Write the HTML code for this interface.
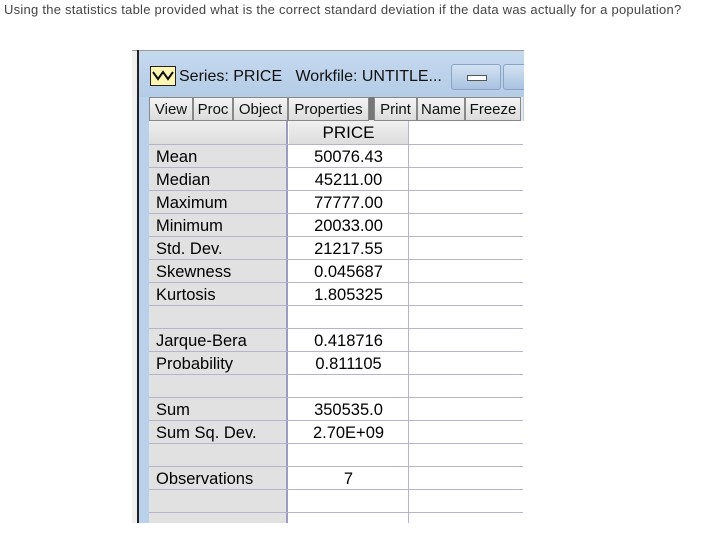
<!DOCTYPE html>
<html><head><style>
body{margin:0;width:703px;height:535px;background:#fff;position:relative;overflow:hidden;font-family:"Liberation Sans",sans-serif}
.q{position:absolute;left:4px;top:2px;font-size:13px;letter-spacing:0.25px;color:#444}
.a{position:absolute}
.btn{position:absolute;top:97px;height:24px;background:linear-gradient(#f4f4f4,#dcdcdc);border:1px solid #888;box-sizing:border-box;font-size:15px;line-height:23px;text-align:center;color:#111}
.row{position:absolute;left:149px;width:374px;height:23px;border-bottom:1px solid #b4b4cc;box-sizing:border-box}
.l{position:absolute;left:0;top:0;width:139px;height:22px;background:#e1e1e1;border-right:2px solid #9c9cc0;box-sizing:border-box;font-size:16.5px;line-height:25px;padding-left:7px;color:#000}
.v{position:absolute;left:140px;top:0;width:119px;height:22px;border-right:1px solid #b4b4cc;font-size:16.5px;line-height:25px;text-align:center;color:#000}
</style></head><body>
<div class="q">Using the statistics table provided what is the correct standard deviation if the data was actually for a population?</div>
<div class="a" style="left:132px;top:50px;width:392px;height:480px;background:#f0f0f0;border-top:1px solid #999"></div>
<div class="a" style="left:138px;top:51px;width:386px;height:480px;background:#b9d1ea;border-left:1px solid #333;border-top-left-radius:6px"></div>
<div class="a" style="left:138px;top:51px;width:386px;height:46px;background:linear-gradient(#c6d9ef,#b4cce6)"></div>
<div class="a" style="left:150px;top:66px;width:26px;height:20px;background:#fff6b4;border:1px solid #222;box-sizing:border-box">
<svg width="24" height="18" style="position:absolute;left:0;top:0"><path d="M2 5 L7 12 L12 5 L17 12 L22 5" fill="none" stroke="#111" stroke-width="2"/></svg></div>
<div class="a" style="left:179px;top:68px;font-size:16px;color:#111;white-space:nowrap">Series: PRICE&nbsp;&nbsp; Workfile: UNTITLE...</div>
<div class="a" style="left:451px;top:64px;width:48px;height:24px;border:1px solid #8aa4c4;border-radius:3px;background:linear-gradient(#d3e2f3,#a9c2e0)"><div style="position:absolute;left:15px;top:10px;width:18px;height:4px;background:#fff;border:1px solid #555"></div></div>
<div class="a" style="left:503px;top:64px;width:30px;height:24px;border:1px solid #8aa4c4;border-radius:3px;background:linear-gradient(#d3e2f3,#a9c2e0)"></div>
<div class="a" style="left:149px;top:97px;width:374px;height:24px;background:#e8e8e8"></div>
<div class="btn" style="left:149px;width:44px">View</div>
<div class="btn" style="left:193px;width:40px">Proc</div>
<div class="btn" style="left:233px;width:55px">Object</div>
<div class="btn" style="left:288px;width:81px">Properties</div>
<div class="a" style="left:369px;top:97px;width:5px;height:23px;background:#777"></div>
<div class="btn" style="left:374px;width:43px">Print</div>
<div class="btn" style="left:417px;width:48px">Name</div>
<div class="btn" style="left:465px;width:56px">Freeze</div>
<div class="a" style="left:149px;top:121px;width:375px;height:410px;background:#fff"></div>
<div class="row" style="top:121px;height:24px"><div class="l" style="height:23px;background:linear-gradient(#eee,#ddd)"></div><div class="v" style="height:23px;background:linear-gradient(#f0f0f0,#ddd);font-size:17px;line-height:24px">PRICE</div></div>
<div class="row" style="top:145px"><div class="l">Mean</div><div class="v">50076.43</div></div>
<div class="row" style="top:168px"><div class="l">Median</div><div class="v">45211.00</div></div>
<div class="row" style="top:191px"><div class="l">Maximum</div><div class="v">77777.00</div></div>
<div class="row" style="top:214px"><div class="l">Minimum</div><div class="v">20033.00</div></div>
<div class="row" style="top:237px"><div class="l">Std. Dev.</div><div class="v">21217.55</div></div>
<div class="row" style="top:260px"><div class="l">Skewness</div><div class="v">0.045687</div></div>
<div class="row" style="top:283px"><div class="l">Kurtosis</div><div class="v">1.805325</div></div>
<div class="row" style="top:306px"><div class="l"></div><div class="v"></div></div>
<div class="row" style="top:329px"><div class="l">Jarque-Bera</div><div class="v">0.418716</div></div>
<div class="row" style="top:352px"><div class="l">Probability</div><div class="v">0.811105</div></div>
<div class="row" style="top:375px"><div class="l"></div><div class="v"></div></div>
<div class="row" style="top:398px"><div class="l">Sum</div><div class="v">350535.0</div></div>
<div class="row" style="top:421px"><div class="l">Sum Sq. Dev.</div><div class="v">2.70E+09</div></div>
<div class="row" style="top:444px"><div class="l"></div><div class="v"></div></div>
<div class="row" style="top:467px"><div class="l">Observations</div><div class="v">7</div></div>
<div class="row" style="top:490px"><div class="l"></div><div class="v"></div></div>
<div class="row" style="top:513px;height:10px;border:0"><div class="l" style="height:10px"></div><div class="v" style="height:10px"></div></div>
<div class="a" style="left:0;top:523px;width:703px;height:12px;background:#fff"></div>
<div class="a" style="left:524px;top:40px;width:179px;height:495px;background:#fff"></div>
<div class="a" style="left:137px;top:50px;width:2px;height:473px;background:#222"></div>
</body></html>
